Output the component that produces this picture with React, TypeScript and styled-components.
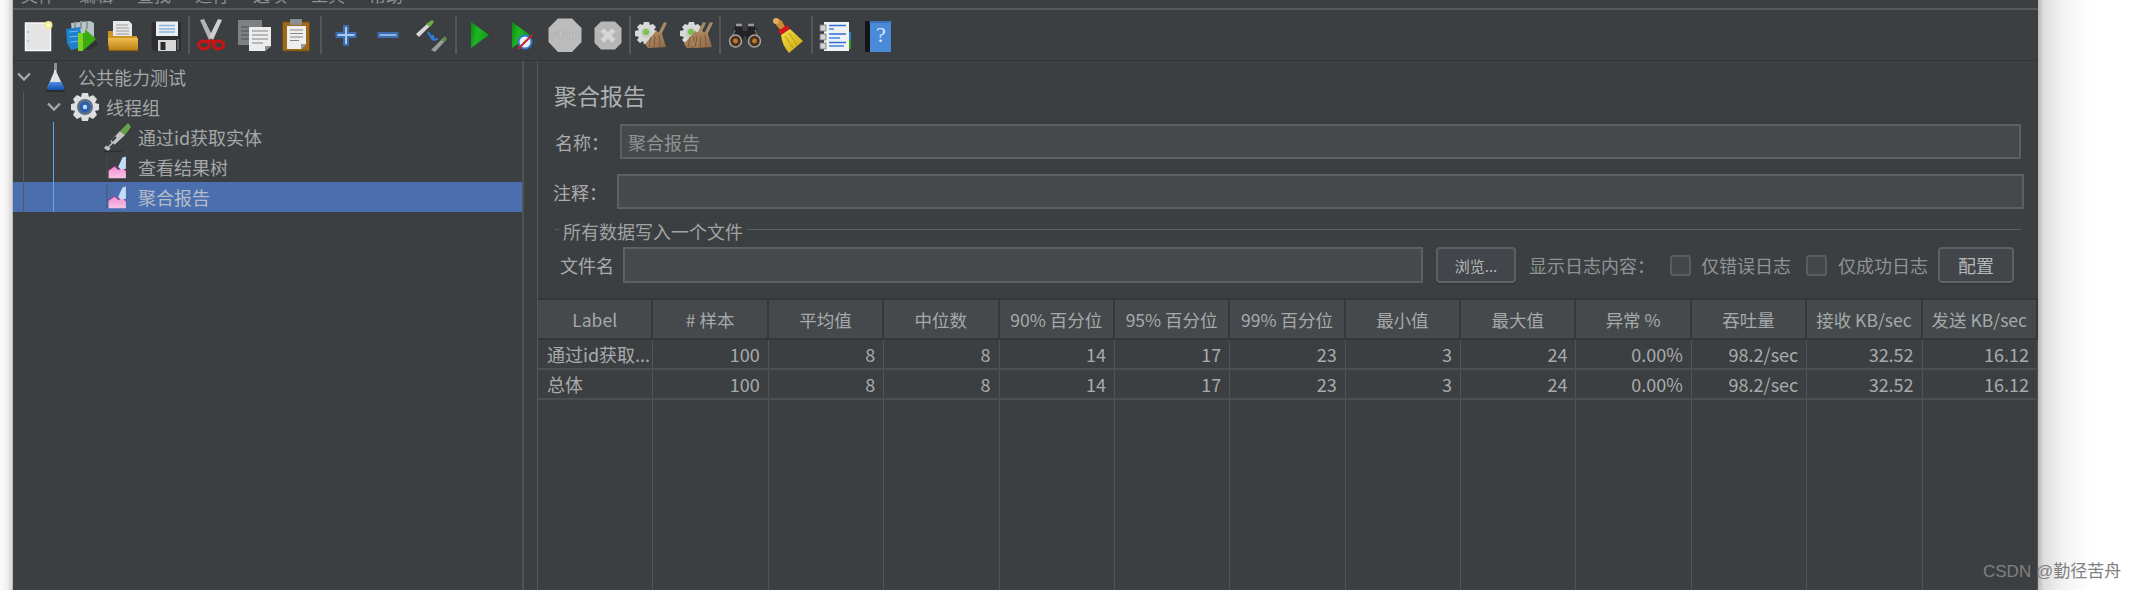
import React from "react";
import styled, { createGlobalStyle } from "styled-components";

const Global = createGlobalStyle`
  html, body { margin: 0; padding: 0; background: #fff; }
  body { font-family: "Noto Sans CJK SC", "Liberation Sans", sans-serif; }
  * { box-sizing: border-box; }
`;

const Page = styled.div`
  position: relative;
  width: 2135px;
  height: 590px;
  display: flex;
  overflow: hidden;
  background: #fff;
`;
const LeftGutter = styled.div`
  width: 13px;
  background: linear-gradient(90deg, #fafafa 0%, #f2f2f2 50%, #d8d8d8 90%, #aaa 100%);
`;
const RightGutter = styled.div`
  flex: 1;
  background: linear-gradient(90deg, #b8b8b8 0%, #dedede 6%, #f2f2f2 25%, #fff 55%);
`;
const Win = styled.div`
  width: 2025px;
  display: flex;
  flex-direction: column;
  background: #3c3f41;
  color: #a8abad;
  font-size: 18px;
`;
const MenuBar = styled.div`
  height: 10px;
  flex: none;
  display: flex;
  align-items: flex-end;
  overflow: hidden;
  padding-left: 8px;
  gap: 24px;
  border-bottom: 2px solid #565859;
  color: #8d9092;
  font-size: 17px;
  line-height: 20px;
`;
const MenuItem = styled.span`
  transform: translateY(-3px);
  white-space: nowrap;
  flex: none;
`;
const ToolBar = styled.div`
  height: 51px;
  flex: none;
  display: flex;
  align-items: center;
  padding-left: 4px;
  border-bottom: 1px solid #323436;
`;
const Tool = styled.div`
  width: 42.5px;
  height: 36px;
  flex: none;
  display: flex;
  justify-content: center;
  align-items: center;
`;
const Sep = styled.div<{ $w: number }>`
  width: ${(p) => p.$w}px;
  height: 38px;
  flex: none;
  display: flex;
  justify-content: center;
  &::before {
    content: "";
    width: 2px;
    height: 100%;
    flex: none;
    background: #54575a;
  }
`;
const Icon = styled.svg`
  width: 36px;
  height: 36px;
  display: block;
  overflow: visible;
`;
const Body = styled.div`
  flex: 1;
  display: flex;
  min-height: 0;
`;
const Tree = styled.div`
  width: 509px;
  flex: none;
  padding-top: 1px;
  position: relative;
`;
const TreeRow = styled.div<{ $sel?: boolean; $indent: number }>`
  height: 30px;
  display: flex;
  align-items: center;
  padding-left: ${(p) => p.$indent}px;
  background: ${(p) => (p.$sel ? "#4b6eaf" : "transparent")};
  color: ${(p) => (p.$sel ? "#b4bcc8" : "#a4a7a9")};
  white-space: nowrap;
  position: relative;
`;
const Guide = styled.span<{ $x: number; $blue?: boolean }>`
  position: absolute;
  left: ${(p) => p.$x}px;
  top: 0;
  bottom: 0;
  width: 1px;
  background: ${(p) => (p.$blue ? "#5fa8e8" : "#56595b")};
`;
const Chevron = styled.svg`
  width: 14px;
  height: 10px;
  flex: none;
  margin-right: 9px;
`;
const Node = styled.svg`
  width: 30px;
  height: 30px;
  flex: none;
  margin-right: 6px;
`;
const FlaskNode = styled(Node)`
  margin-right: 8px;
`;
const GraphNode = styled(Node)`
  width: 26px;
  margin-left: 4px;
  margin-right: 6px;
`;
const Divider = styled.div`
  width: 16px;
  flex: none;
  border-left: 2px solid #505355;
  border-right: 1px solid #55585a;
`;
const Pane = styled.div`
  flex: 1;
  min-width: 0;
  display: flex;
  flex-direction: column;
`;
const Title = styled.div`
  height: 63px;
  flex: none;
  padding: 20px 0 0 16px;
  font-size: 23px;
  line-height: 28px;
  color: #acafb1;
`;
const FormRow = styled.div<{ $pl: number; $pr: number; $h: number; $mb: number }>`
  height: ${(p) => p.$h}px;
  margin-bottom: ${(p) => p.$mb}px;
  padding: 0 ${(p) => p.$pr}px 0 ${(p) => p.$pl}px;
  display: flex;
  align-items: center;
  flex: none;
`;
const Label = styled.label<{ $w: number }>`
  width: ${(p) => p.$w}px;
  flex: none;
  color: #a8abad;
  white-space: nowrap;
`;
const Field = styled.div`
  flex: 1;
  height: 100%;
  background: #45494a;
  border: 2px solid #5d6061;
  padding-left: 6px;
  display: flex;
  align-items: center;
  color: #8f9395;
  font-size: 18px;
  white-space: nowrap;
`;
const FileField = styled(Field)`
  flex: none;
  width: 800px;
`;
const Legend = styled.div`
  height: 24px;
  margin: 10px 17px 4px 17px;
  flex: none;
  display: flex;
  align-items: center;
  gap: 4px;
  color: #a0a3a5;
  line-height: 24px;
  &::before {
    content: "";
    width: 4px;
    height: 1px;
    margin-top: -4px;
    background: #5d6061;
  }
  &::after {
    content: "";
    flex: 1;
    height: 1px;
    margin-top: -4px;
    background: #5d6061;
  }
`;
const Btn = styled.div<{ $w: number; $size: number; $ml: number }>`
  width: ${(p) => p.$w}px;
  height: 100%;
  margin-left: ${(p) => p.$ml}px;
  flex: none;
  border: 2px solid #5e6163;
  border-bottom-color: #626567;
  border-radius: 4px;
  background: #42464a;
  box-shadow: 0 1px 1px #333;
  display: flex;
  align-items: center;
  justify-content: center;
  color: #b4b6b8;
  font-size: ${(p) => p.$size}px;
  white-space: nowrap;
`;
const Note = styled.span<{ $ml: number }>`
  margin-left: ${(p) => p.$ml}px;
  color: #8f9395;
  white-space: nowrap;
  flex: none;
`;
const Check = styled.span<{ $ml: number }>`
  width: 21px;
  height: 21px;
  margin-left: ${(p) => p.$ml}px;
  flex: none;
  border: 2px solid #5a5d60;
  border-radius: 3px;
  background: #43474a;
`;
const Table = styled.div`
  flex: 1;
  min-height: 0;
  margin-top: 15px;
  display: flex;
  flex-direction: column;
  border-top: 2px solid #333537;
`;
const Row = styled.div<{ $h?: number; $line?: boolean }>`
  display: grid;
  grid-template-columns: repeat(13, 1fr);
  flex: ${(p) => (p.$h ? "none" : "1")};
  height: ${(p) => (p.$h ? `${p.$h}px` : "auto")};
  border-bottom: ${(p) => (p.$line ? "2px solid #4c4f51" : "none")};
`;
const HeadCell = styled.div`
  background: #45494b;
  border-right: 2px solid #35383a;
  border-bottom: 2px solid #343638;
  display: flex;
  align-items: center;
  justify-content: center;
  color: #a6a9ab;
  font-size: 17.5px;
  white-space: nowrap;
  overflow: hidden;
`;
const Cell = styled.div<{ $left?: boolean }>`
  border-right: 1px solid #515456;
  padding: 0 ${(p) => (p.$left ? "0" : "8px")} 0 ${(p) => (p.$left ? "9px" : "0")};
  line-height: 28px;
  text-align: ${(p) => (p.$left ? "left" : "right")};
  color: #a8abad;
  font-size: 18px;
  white-space: nowrap;
  overflow: hidden;
`;
const Blank = styled.div`
  border-right: 1px solid #515456;
`;
const Watermark = styled.div`
  position: absolute;
  left: 1983px;
  top: 561px;
  font-family: "Liberation Sans", "Noto Sans CJK SC", sans-serif;
  font-size: 17px;
  line-height: 22px;
  color: #808080;
  white-space: nowrap;
`;

const Defs = () => (
  <svg width="0" height="0" style={{ position: "absolute" }}>
    <defs>
      <linearGradient id="gPlay" x1="0" y1="0" x2="1" y2="0.3">
        <stop offset="0" stopColor="#0a8a10" />
        <stop offset="0.45" stopColor="#1fb524" />
        <stop offset="1" stopColor="#0f9d15" />
      </linearGradient>
      <linearGradient id="gFolder" x1="0" y1="0" x2="0" y2="1">
        <stop offset="0" stopColor="#f0bd4c" />
        <stop offset="1" stopColor="#b77f12" />
      </linearGradient>
      <linearGradient id="gBroom" x1="0" y1="0" x2="1" y2="1">
        <stop offset="0" stopColor="#b89068" />
        <stop offset="1" stopColor="#8f6a48" />
      </linearGradient>
      <linearGradient id="gYellow" x1="0" y1="0" x2="1" y2="1">
        <stop offset="0" stopColor="#f5e04a" />
        <stop offset="1" stopColor="#c9a40f" />
      </linearGradient>
      <linearGradient id="gPink" x1="0" y1="0" x2="0" y2="1">
        <stop offset="0" stopColor="#f08fd0" />
        <stop offset="1" stopColor="#f6c3e6" />
      </linearGradient>
      <linearGradient id="gFlask" x1="0" y1="0" x2="0" y2="1">
        <stop offset="0" stopColor="#4e8fe0" />
        <stop offset="1" stopColor="#134fb0" />
      </linearGradient>
    </defs>
  </svg>
);

const broomBits = (dx: number) => (
  <g transform={`translate(${dx} 0)`}>
    <path d="M30 5 L33 6 L27 18 L24 17Z" fill="#a98a68" />
    <path d="M22 14 L28 17 L32 30 L14 31 L11 27Z" fill="url(#gBroom)" />
    <path d="M17 20 L15 30 M21 19 L20 31 M25 18 L26 30" stroke="#7b5a3a" strokeWidth="1" />
  </g>
);
const gear = (
  <g>
    <path d="M10 5 L15 5 L16 8 L19 7 L22 10 L20 13 L23 14 L23 19 L20 20 L21 23 L18 26 L15 24 L14 27 L10 27 L9 24 L6 26 L3 23 L5 20 L1 19 L1 14 L5 13 L3 10 L6 7 L9 8Z" fill="#d9d9d9" />
    <circle cx="12" cy="16" r="5" fill="#c4cdbb" />
    <circle cx="12" cy="15" r="3" fill="#7cc14f" />
  </g>
);

const Tools: Record<string, React.ReactNode> = {
  newDoc: (
    <>
      <rect x="5.5" y="6" width="25" height="27.5" fill="#e4e4e4" stroke="#f8f8f8" strokeWidth="1.5" />
      <circle cx="8" cy="15" r="0.8" fill="#999" />
      <circle cx="8" cy="24" r="0.8" fill="#999" />
      <circle cx="28.5" cy="8" r="4" fill="#f2eb8c" />
      <circle cx="28.5" cy="8" r="2" fill="#fdfbd8" />
    </>
  ),
  template: (
    <>
      <path d="M8 6 L27 4 L31 6 L31 24 L10 26Z" fill="#b9c3c8" />
      <path d="M12 5 L12 12 M18 4 L18 12 M24 4 L24 12" stroke="#8d989e" strokeWidth="2" />
      <path d="M3 12 L17 10 L20 30 L8 33 L4 26Z" fill="#1f80cb" />
      <path d="M6 15 L15 14 M6 20 L16 19 M7 25 L17 24" stroke="#6db6ea" strokeWidth="1.2" />
      <path d="M15 16 L22 16 L22 12 L33 22 L22 32 L15 34Z" fill="#39ab0e" />
      <path d="M15 16 L20 16 L20 34 L15 34Z" fill="#7fd11f" />
      <path d="M22 32 L33 24 L35 28 L26 33Z" fill="#26282a" opacity="0.6" />
    </>
  ),
  open: (
    <>
      <path d="M8 4 L24 4 L27 7 L27 21 L8 21Z" fill="#e8e8e8" />
      <path d="M11 8 H23 M11 11 H24 M11 14 H24 M11 17 H24" stroke="#9a9a9a" strokeWidth="1.2" />
      <path d="M3 14 L8 14 L8 19 L32 19 L32 29 L3 29Z" fill="#c99728" />
      <path d="M3 21 L33 21 L33 34 L4 34Z" fill="url(#gFolder)" />
      <path d="M4 33.5 H33" stroke="#8a5f10" strokeWidth="1.2" />
    </>
  ),
  save: (
    <>
      <path d="M3.5 5 L33 5 L33 34 L6 34 L3.5 31Z" fill="#2e2e30" />
      <rect x="8" y="4.5" width="22" height="14.5" fill="#e9eef3" />
      <path d="M11 8.5 H27 M11 12 H27 M11 15 H27" stroke="#8fb4d8" strokeWidth="1.6" />
      <rect x="10" y="23" width="18" height="11" fill="#d8d8d8" />
      <rect x="12.5" y="25" width="5" height="8" fill="#2a2a2a" />
      <path d="M30 22 V33" stroke="#6a6a6c" strokeWidth="1.5" />
    </>
  ),
  cut: (
    <>
      <path d="M7 3 L11 2 L20 20 L16 23Z" fill="#b4b4b4" />
      <path d="M29 3 L25 2 L16 20 L20 23Z" fill="#cfcfcf" />
      <g fill="none" stroke="#c81414" strokeWidth="3.2">
        <ellipse cx="11" cy="28" rx="5.2" ry="3.8" />
        <ellipse cx="25.5" cy="28" rx="5.2" ry="3.8" />
      </g>
      <path d="M14 24 L22 24" stroke="#c81414" strokeWidth="2.5" />
    </>
  ),
  copy: (
    <>
      <rect x="2" y="3" width="24" height="25" fill="#7e8183" />
      <path d="M5 10 H13 M5 14 H13 M5 18 H13 M5 22 H13" stroke="#5f6264" strokeWidth="1.4" />
      <path d="M13 10 L35 10 L35 29 L29 34 L13 34Z" fill="#ececec" />
      <path d="M16 14 H32 M16 18 H32 M16 22 H32 M16 26 H27" stroke="#a5a5a5" strokeWidth="1.3" />
      <path d="M35 29 L29 29 L29 34Z" fill="#8d8d8d" />
    </>
  ),
  paste: (
    <>
      <rect x="4.5" y="5" width="27" height="29" rx="1" fill="#9a6a20" stroke="#6e4a12" strokeWidth="1" />
      <rect x="12" y="2" width="12" height="6" rx="1" fill="#8b8d8f" />
      <path d="M9 9 L28 9 L28 27 L23 32 L9 32Z" fill="#eeeeee" />
      <path d="M12 13 H25 M12 16.5 H25 M12 20 H25 M12 23.5 H21" stroke="#888" strokeWidth="1.2" />
      <path d="M28 27 L23 27 L23 32Z" fill="#9a9a9a" />
    </>
  ),
  plus: (
    <>
      <path d="M15 8 H21 V15 H28.5 V21 H21 V29 H15 V21 H7.5 V15 H15Z" fill="#3d6bb0" />
      <path d="M17 10 H19 V17 H26.5 V19 H19 V27 H17 V19 H9.5 V17 H17Z" fill="#a9c8ee" />
    </>
  ),
  minus: (
    <>
      <rect x="7.5" y="15" width="21" height="6" fill="#3d6bb0" />
      <rect x="9.5" y="17" width="17" height="2" fill="#8db2e2" />
    </>
  ),
  wand: (
    <>
      <path d="M3 17 L14 7 L17 9 L6 20Z" fill="#d8d8d8" />
      <path d="M13 7 L19 3 L21 5 L17 10Z" fill="#6fae47" />
      <path d="M15 15 L20 23 M20 23 L20 18 M20 23 L25 22" stroke="#2f7be0" strokeWidth="2.2" fill="none" />
      <path d="M18 33 L30 21 L33 23 L22 35Z" fill="#9a9d9a" />
      <path d="M28 23 L32 19 L34 22 L31 25Z" fill="#5f8a50" />
    </>
  ),
  play: <path d="M9 5 L27 18 L9 31Z" fill="url(#gPlay)" />,
  playNo: (
    <>
      <path d="M7 5 L25 18 L7 31Z" fill="url(#gPlay)" />
      <circle cx="20" cy="25" r="6.5" fill="#e8f0fa" stroke="#2d78d0" strokeWidth="2" />
      <path d="M13 32 L27 18" stroke="#c8242c" strokeWidth="2.2" />
    </>
  ),
  stop: (
    <>
      <path d="M11 1.5 H25 L34.5 11 V25 L25 35 H11 L1.5 25 V11Z" fill="#bcbcbc" />
      <text x="18" y="22.5" textAnchor="middle" fontSize="11.5" fontWeight="700" fontFamily="Liberation Sans, sans-serif" fill="#cdcdcd" stroke="#a6a6a6" strokeWidth="0.5">
        STOP
      </text>
    </>
  ),
  shut: (
    <>
      <path d="M11 4.5 H25 L31.5 11 V26 L25 32.5 H11 L4.5 26 V11Z" fill="#b6b6b6" />
      <path d="M12 13 L24 24 M24 13 L12 24" stroke="#d6d6d6" strokeWidth="4.5" />
    </>
  ),
  clear: (
    <>
      {gear}
      {broomBits(0)}
    </>
  ),
  clearAll: (
    <>
      <g transform="translate(2 0)">{gear}</g>
      {broomBits(-4)}
      {broomBits(3)}
    </>
  ),
  search: (
    <>
      <path d="M6 14 L9 8 L15 8 L16 14 L20 14 L21 8 L27 8 L30 14 L35 26 L30 30 L22 29 L19 19 L17 19 L14 29 L6 30 L1 26Z" fill="#232325" />
      <path d="M9 8 H15 M21 8 H27" stroke="#9a9a9c" strokeWidth="2.4" />
      <path d="M8 13 L4 22 M28 13 L32 22" stroke="#6c6c70" strokeWidth="1.6" />
      <circle cx="8.5" cy="24" r="6" fill="#4d3018" stroke="#a4a4a8" strokeWidth="1.6" />
      <circle cx="27.5" cy="24" r="6" fill="#4d3018" stroke="#a4a4a8" strokeWidth="1.6" />
      <circle cx="8.5" cy="24" r="2.4" fill="#b97a3c" />
      <circle cx="27.5" cy="24" r="2.4" fill="#b97a3c" />
    </>
  ),
  broom: (
    <>
      <path d="M3 4 L7 1 L12 4 L16 12 L12 15 L7 9Z" fill="#c88a36" />
      <circle cx="6" cy="4" r="3" fill="#e2ae5e" />
      <path d="M8 14 L17 8 L20 12 L11 18Z" fill="#d2141e" />
      <path d="M11 18 L20 12 L33 24 L19 36 Q12 28 11 18Z" fill="url(#gYellow)" />
      <path d="M15 19 L23 31 M19 16 L27 28" stroke="#b89812" strokeWidth="1" />
    </>
  ),
  list: (
    <>
      <rect x="27" y="15" width="7" height="8" fill="#2f7fd8" />
      <rect x="27" y="23" width="7" height="9" fill="#329a22" />
      <rect x="7" y="5" width="25" height="29" fill="#f2f2f2" />
      <rect x="3" y="8" width="6" height="6" fill="#d2d2d2" stroke="#777" strokeWidth="0.8" />
      <rect x="3" y="17" width="6" height="6" fill="#d2d2d2" stroke="#777" strokeWidth="0.8" />
      <rect x="3" y="26" width="6" height="6" fill="#d2d2d2" stroke="#777" strokeWidth="0.8" />
      <path d="M12 8.5 H29 M12 17 H29 M12 25.5 H29" stroke="#2f6fd8" strokeWidth="1.5" />
      <path d="M12 12 H17 M12 21 H23 M12 29 H27" stroke="#3d86e6" strokeWidth="1.5" />
    </>
  ),
  help: (
    <>
      <rect x="5" y="4" width="6" height="31" fill="#141618" />
      <rect x="10" y="4" width="21" height="31" fill="#4a8ad8" />
      <text x="21" y="25" textAnchor="middle" fontSize="22" fontFamily="Liberation Serif, serif" fill="#dbe8f7">
        ?
      </text>
      <path d="M9 5 H30" stroke="#2a5c9c" strokeWidth="1" />
    </>
  ),
};

const Flask = () => (
  <FlaskNode viewBox="0 0 30 30">
    <path d="M14 1 L16.5 1 L16.5 10 L23 24 Q24 27 22 28 L9 28 Q7 27 8 24 L14 10Z" fill="#dfe3e6" />
    <path d="M14 1 L16.5 1 L16.5 8 L14 8Z" fill="#8d9194" />
    <path d="M9.5 20 L21.5 20 L24 26 Q23.5 28 22 28 L9 28 Q7.5 28 7 26Z" fill="url(#gFlask)" />
    <path d="M6 29 H25" stroke="#23262a" strokeWidth="1.4" />
  </FlaskNode>
);
const Gear = () => (
  <Node viewBox="0 0 30 30">
    <path d="M12 1 H18 L19 5 L23 3 L27 7 L25 11 L29 12 V18 L25 19 L27 23 L23 27 L19 25 L18 29 H12 L11 25 L7 27 L3 23 L5 19 L1 18 V12 L5 11 L3 7 L7 3 L11 5Z" fill="#dcdee0" />
    <circle cx="15" cy="15" r="8" fill="#5e6f86" />
    <circle cx="15" cy="15" r="5.5" fill="#2a62b0" />
    <circle cx="15" cy="15" r="2.2" fill="#c7daf2" />
  </Node>
);
const Sampler = () => (
  <Node viewBox="0 0 30 30">
    <path d="M2 26 L18 9 L23 13 L6 29Z" fill="#c4c4c4" />
    <path d="M5 24 L9 20 M10 19 L14 15 M8 26 L12 22" stroke="#3a3a3a" strokeWidth="2" />
    <path d="M18 9 L26 1 L29 5 L23 13Z" fill="#66a346" />
    <path d="M2 29.5 H20" stroke="#2c2f31" strokeWidth="1.2" />
  </Node>
);
const Graph = () => (
  <GraphNode viewBox="0 0 30 30">
    <path d="M1 2 V28" stroke="#4a4d4f" strokeWidth="1.4" strokeDasharray="2 1" />
    <path d="M3 28 V19 L10 14 L14 18 L20 16 L23 20 V28Z" fill="url(#gPink)" />
    <path d="M3 19 L10 14 L14 18 L20 16 L23 20" stroke="#b02a80" strokeWidth="1" fill="none" />
    <path d="M14 15 L19 4 L23 3 L23 17 L17 18Z" fill="#c5dcf6" />
  </GraphNode>
);
const Arrow = () => (
  <Chevron viewBox="0 0 14 10">
    <path d="M1 1.5 L7 7.5 L13 1.5" fill="none" stroke="#a4a7a9" strokeWidth="2.4" />
  </Chevron>
);

const toolbar: (string | number)[] = [
  "newDoc", "template", "open", "save", 3,
  "cut", "copy", "paste", 7,
  "plus", "minus", "wand", 7,
  "play", "playNo", "stop", "shut", 2,
  "clear", "clearAll", 8,
  "search", "broom", 5,
  "list", "help",
];
const menus = ["文件", "编辑", "查找", "运行", "选项", "工具", "帮助"];
const heads = ["Label", "# 样本", "平均值", "中位数", "90% 百分位", "95% 百分位", "99% 百分位", "最小值", "最大值", "异常 %", "吞吐量", "接收 KB/sec", "发送 KB/sec"];
const rows = [
  ["通过id获取...", "100", "8", "8", "14", "17", "23", "3", "24", "0.00%", "98.2/sec", "32.52", "16.12"],
  ["总体", "100", "8", "8", "14", "17", "23", "3", "24", "0.00%", "98.2/sec", "32.52", "16.12"],
];

export default function App() {
  return (
    <Page>
      <Global />
      <Defs />
      <LeftGutter />
      <Win>
        <MenuBar>
          {menus.map((m) => (
            <MenuItem key={m}>{m}</MenuItem>
          ))}
        </MenuBar>
        <ToolBar>
          {toolbar.map((t, i) =>
            typeof t === "number" ? (
              <Sep key={i} $w={t} />
            ) : (
              <Tool key={i}>
                <Icon viewBox="0 0 36 36">{Tools[t]}</Icon>
              </Tool>
            )
          )}
        </ToolBar>
        <Body>
          <Tree>
            <TreeRow $indent={4}>
              <Arrow />
              <Flask />
              公共能力测试
            </TreeRow>
            <TreeRow $indent={34}>
              <Guide $x={10} />
              <Arrow />
              <Gear />
              线程组
            </TreeRow>
            <TreeRow $indent={89}>
              <Guide $x={10} />
              <Guide $x={40} $blue />
              <Sampler />
              通过id获取实体
            </TreeRow>
            <TreeRow $indent={89}>
              <Guide $x={10} />
              <Guide $x={40} $blue />
              <Graph />
              查看结果树
            </TreeRow>
            <TreeRow $indent={89} $sel>
              <Guide $x={10} />
              <Guide $x={40} $blue />
              <Graph />
              聚合报告
            </TreeRow>
          </Tree>
          <Divider />
          <Pane>
            <Title>聚合报告</Title>
            <FormRow $pl={17} $pr={17} $h={35} $mb={15}>
              <Label $w={65}>名称：</Label>
              <Field>聚合报告</Field>
            </FormRow>
            <FormRow $pl={15} $pr={14} $h={35} $mb={0}>
              <Label $w={64}>注释：</Label>
              <Field />
            </FormRow>
            <Legend>所有数据写入一个文件</Legend>
            <FormRow $pl={22} $pr={24} $h={36} $mb={0}>
              <Label $w={63}>文件名</Label>
              <FileField />
              <Btn $w={80} $size={15} $ml={13}>浏览...</Btn>
              <Note $ml={13}>显示日志内容：</Note>
              <Check $ml={15} />
              <Note $ml={10}>仅错误日志</Note>
              <Check $ml={15} />
              <Note $ml={11}>仅成功日志</Note>
              <Btn $w={76} $size={18} $ml={10}>配置</Btn>
            </FormRow>
            <Table>
              <Row $h={40}>
                {heads.map((h) => (
                  <HeadCell key={h}>{h}</HeadCell>
                ))}
              </Row>
              {rows.map((r) => (
                <Row key={r[0]} $h={30} $line>
                  {r.map((c, i) => (
                    <Cell key={i} $left={i === 0}>{c}</Cell>
                  ))}
                </Row>
              ))}
              <Row>
                {heads.map((h) => (
                  <Blank key={h} />
                ))}
              </Row>
            </Table>
          </Pane>
        </Body>
      </Win>
      <RightGutter />
      <Watermark>CSDN @勤径苦舟</Watermark>
    </Page>
  );
}
